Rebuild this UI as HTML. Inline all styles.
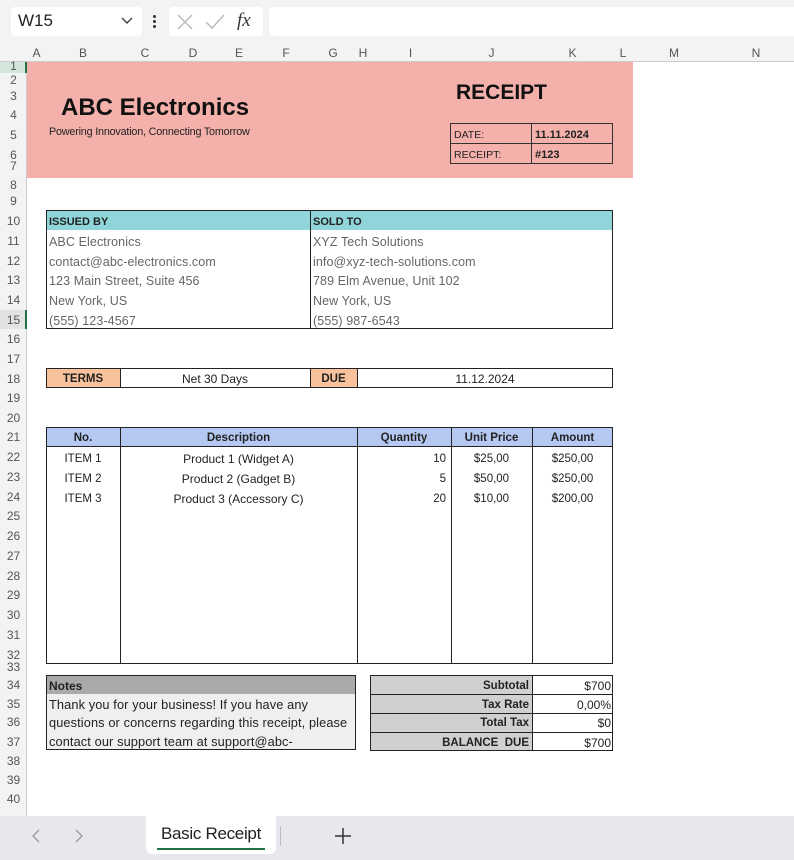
<!DOCTYPE html>
<html><head><meta charset="utf-8"><style>
*{margin:0;padding:0;box-sizing:border-box}
body{width:794px;height:860px;position:relative;overflow:hidden;background:#fff;font-family:"Liberation Sans",sans-serif;font-size:11.5px;color:#222}
.a{position:absolute}
.b{position:absolute;border:1px solid #222}
.t{position:absolute;white-space:nowrap;line-height:19px;padding-top:1px}
.rn{position:absolute;left:0;width:27px;text-align:center;color:#555;font-size:12px}
.ch{position:absolute;top:44px;height:18px;line-height:18px;color:#555;font-size:12px;text-align:center}
.g{color:#666;font-size:12.5px;letter-spacing:0.1px}
.n{font-size:12.8px;letter-spacing:0.1px}
</style></head><body>
<div class="a" style="left:0;top:0;width:794px;height:44px;background:#f3f3f3"></div>
<div class="a" style="left:11px;top:7px;width:131px;height:29px;background:#fff;border-radius:4px"></div>
<div class="t" style="left:18px;top:10px;font-size:17px;line-height:20px;color:#222">W15</div>
<svg class="a" style="left:120px;top:16px" width="14" height="10"><path d="M2 2 L7 7 L12 2" stroke="#444" stroke-width="1.5" fill="none"/></svg>
<div class="a" style="left:153px;top:15px;width:3px;height:3px;background:#333;border-radius:2px;box-shadow:0 5px 0 #333,0 10px 0 #333"></div>
<div class="a" style="left:169px;top:7px;width:94px;height:29px;background:#fff;border-radius:4px"></div>
<svg class="a" style="left:175px;top:12px" width="20" height="20"><path d="M3 3 L17 17 M17 3 L3 17" stroke="#bbb" stroke-width="1.5"/></svg>
<svg class="a" style="left:204px;top:12px" width="22" height="20"><path d="M2 10 L8 16 L20 3" stroke="#bbb" stroke-width="1.5" fill="none"/></svg>
<div class="t" style="left:237px;top:8px;font-family:'Liberation Serif',serif;font-style:italic;font-size:19px;line-height:24px;color:#333">fx</div>
<div class="a" style="left:269px;top:7px;width:530px;height:29px;background:#fff;border-radius:4px"></div>
<div class="a" style="left:0;top:44px;width:794px;height:18px;background:#f3f3f3;border-bottom:1px solid #ccc"></div>
<div class="ch" style="left:27px;width:19px">A</div>
<div class="ch" style="left:46px;width:74px">B</div>
<div class="ch" style="left:120px;width:50px">C</div>
<div class="ch" style="left:170px;width:46px">D</div>
<div class="ch" style="left:216px;width:46px">E</div>
<div class="ch" style="left:262px;width:48px">F</div>
<div class="ch" style="left:310px;width:46px">G</div>
<div class="ch" style="left:356px;width:14px">H</div>
<div class="ch" style="left:370px;width:81px">I</div>
<div class="ch" style="left:451px;width:81px">J</div>
<div class="ch" style="left:532px;width:81px">K</div>
<div class="ch" style="left:613px;width:20px">L</div>
<div class="ch" style="left:633px;width:82px">M</div>
<div class="ch" style="left:715px;width:82px">N</div>
<div class="a" style="left:0;top:62px;width:27px;height:754px;background:#f3f3f3;border-right:1px solid #ccc"></div>
<div class="a" style="left:0;top:62px;width:27px;height:11px;background:#d3e6da;border-right:2px solid #217346"></div>
<div class="a" style="left:0;top:310px;width:27px;height:19px;background:#e2e2e2;border-right:2px solid #217346"></div>
<div class="rn" style="top:59px;line-height:14px">1</div>
<div class="rn" style="top:73px;line-height:14px">2</div>
<div class="rn" style="top:88px;line-height:16px">3</div>
<div class="rn" style="top:106px;line-height:18px">4</div>
<div class="rn" style="top:126px;line-height:18px">5</div>
<div class="rn" style="top:146px;line-height:18px">6</div>
<div class="rn" style="top:160px;line-height:12px">7</div>
<div class="rn" style="top:176px;line-height:18px">8</div>
<div class="rn" style="top:192px;line-height:18px">9</div>
<div class="rn" style="top:212px;line-height:18px">10</div>
<div class="rn" style="top:232px;line-height:18px">11</div>
<div class="rn" style="top:252px;line-height:18px">12</div>
<div class="rn" style="top:271px;line-height:18px">13</div>
<div class="rn" style="top:291px;line-height:18px">14</div>
<div class="rn" style="top:311px;line-height:18px">15</div>
<div class="rn" style="top:330px;line-height:18px">16</div>
<div class="rn" style="top:350px;line-height:18px">17</div>
<div class="rn" style="top:370px;line-height:18px">18</div>
<div class="rn" style="top:389px;line-height:18px">19</div>
<div class="rn" style="top:409px;line-height:18px">20</div>
<div class="rn" style="top:428px;line-height:18px">21</div>
<div class="rn" style="top:448px;line-height:18px">22</div>
<div class="rn" style="top:468px;line-height:18px">23</div>
<div class="rn" style="top:488px;line-height:18px">24</div>
<div class="rn" style="top:507px;line-height:18px">25</div>
<div class="rn" style="top:527px;line-height:18px">26</div>
<div class="rn" style="top:547px;line-height:18px">27</div>
<div class="rn" style="top:567px;line-height:18px">28</div>
<div class="rn" style="top:586px;line-height:18px">29</div>
<div class="rn" style="top:606px;line-height:18px">30</div>
<div class="rn" style="top:626px;line-height:18px">31</div>
<div class="rn" style="top:646px;line-height:18px">32</div>
<div class="rn" style="top:661px;line-height:12px">33</div>
<div class="rn" style="top:676px;line-height:18px">34</div>
<div class="rn" style="top:695px;line-height:18px">35</div>
<div class="rn" style="top:713px;line-height:18px">36</div>
<div class="rn" style="top:733px;line-height:18px">37</div>
<div class="rn" style="top:752px;line-height:18px">38</div>
<div class="rn" style="top:771px;line-height:18px">39</div>
<div class="rn" style="top:790px;line-height:18px">40</div>
<div class="a" style="left:27px;top:62px;width:606px;height:116px;background:#f4b0ab"></div>
<div class="t" style="left:61px;top:92px;font-size:24px;line-height:30px;font-weight:bold;color:#111">ABC Electronics</div>
<div class="t" style="left:49px;top:124px;font-size:10.8px;line-height:14px;color:#222;letter-spacing:-0.2px">Powering Innovation, Connecting Tomorrow</div>
<div class="t" style="left:456px;top:78px;font-size:21px;line-height:28px;font-weight:bold;color:#111">RECEIPT</div>
<div class="b" style="left:450px;top:123px;width:163px;height:41px;border-color:#333"></div>
<div class="a" style="left:450px;top:143px;width:163px;height:1px;background:#333"></div>
<div class="a" style="left:531px;top:123px;width:1px;height:41px;background:#333"></div>
<div class="t" style="left:454px;top:125px;font-size:10.5px">DATE:</div>
<div class="t" style="left:535px;top:125px;font-size:11px;font-weight:bold">11.11.2024</div>
<div class="t" style="left:454px;top:145px;font-size:10.5px">RECEIPT:</div>
<div class="t" style="left:535px;top:145px;font-size:11px;font-weight:bold">#123</div>
<div class="a" style="left:46px;top:210px;width:567px;height:20px;background:#8fd5da"></div>
<div class="b" style="left:46px;top:210px;width:567px;height:119px"></div>
<div class="a" style="left:310px;top:210px;width:1px;height:119px;background:#222"></div>
<div class="t" style="left:49px;top:212px;font-weight:bold;font-size:11px">ISSUED BY</div>
<div class="t" style="left:313px;top:212px;font-weight:bold;font-size:11px">SOLD TO</div>
<div class="t g" style="left:49px;top:232px">ABC Electronics</div>
<div class="t g" style="left:49px;top:252px">contact@abc-electronics.com</div>
<div class="t g" style="left:49px;top:271px">123 Main Street, Suite 456</div>
<div class="t g" style="left:49px;top:291px">New York, US</div>
<div class="t g" style="left:49px;top:311px">(555) 123-4567</div>
<div class="t g" style="left:313px;top:232px">XYZ Tech Solutions</div>
<div class="t g" style="left:313px;top:252px">info@xyz-tech-solutions.com</div>
<div class="t g" style="left:313px;top:271px">789 Elm Avenue, Unit 102</div>
<div class="t g" style="left:313px;top:291px">New York, US</div>
<div class="t g" style="left:313px;top:311px">(555) 987-6543</div>
<div class="a" style="left:46px;top:368px;width:74px;height:20px;background:#f8c39c"></div>
<div class="a" style="left:310px;top:368px;width:47px;height:20px;background:#f8c39c"></div>
<div class="b" style="left:46px;top:368px;width:567px;height:20px"></div>
<div class="a" style="left:120px;top:368px;width:1px;height:20px;background:#222"></div>
<div class="a" style="left:310px;top:368px;width:1px;height:20px;background:#222"></div>
<div class="a" style="left:357px;top:368px;width:1px;height:20px;background:#222"></div>
<div class="t" style="left:46px;width:74px;text-align:center;top:369px;font-weight:bold">TERMS</div>
<div class="t" style="left:120px;width:190px;text-align:center;top:369px;font-size:12px">Net 30 Days</div>
<div class="t" style="left:310px;width:47px;text-align:center;top:369px;font-weight:bold">DUE</div>
<div class="t" style="left:357px;width:256px;text-align:center;top:369px;font-size:12px">11.12.2024</div>
<div class="a" style="left:46px;top:427px;width:567px;height:20px;background:#b4c8f2"></div>
<div class="b" style="left:46px;top:427px;width:567px;height:237px"></div>
<div class="a" style="left:46px;top:446px;width:567px;height:1px;background:#222"></div>
<div class="a" style="left:120px;top:427px;width:1px;height:237px;background:#222"></div>
<div class="a" style="left:357px;top:427px;width:1px;height:237px;background:#222"></div>
<div class="a" style="left:451px;top:427px;width:1px;height:237px;background:#222"></div>
<div class="a" style="left:532px;top:427px;width:1px;height:237px;background:#222"></div>
<div class="t" style="left:46px;width:74px;text-align:center;top:428px;font-weight:bold">No.</div>
<div class="t" style="left:120px;width:237px;text-align:center;top:428px;font-weight:bold">Description</div>
<div class="t" style="left:357px;width:94px;text-align:center;top:428px;font-weight:bold">Quantity</div>
<div class="t" style="left:451px;width:81px;text-align:center;top:428px;font-weight:bold">Unit Price</div>
<div class="t" style="left:532px;width:81px;text-align:center;top:428px;font-weight:bold">Amount</div>
<div class="t" style="left:46px;width:74px;text-align:center;top:449px">ITEM 1</div>
<div class="t" style="left:46px;width:74px;text-align:center;top:469px">ITEM 2</div>
<div class="t" style="left:46px;width:74px;text-align:center;top:489px">ITEM 3</div>
<div class="t" style="left:120px;width:237px;text-align:center;top:449px;font-size:12px">Product 1 (Widget A)</div>
<div class="t" style="left:120px;width:237px;text-align:center;top:469px;font-size:12px">Product 2 (Gadget B)</div>
<div class="t" style="left:120px;width:237px;text-align:center;top:489px;font-size:12px">Product 3 (Accessory C)</div>
<div class="t" style="left:357px;width:89px;text-align:right;top:449px">10</div>
<div class="t" style="left:357px;width:89px;text-align:right;top:469px">5</div>
<div class="t" style="left:357px;width:89px;text-align:right;top:489px">20</div>
<div class="t" style="left:451px;width:81px;text-align:center;top:449px">$25,00</div>
<div class="t" style="left:451px;width:81px;text-align:center;top:469px">$50,00</div>
<div class="t" style="left:451px;width:81px;text-align:center;top:489px">$10,00</div>
<div class="t" style="left:532px;width:81px;text-align:center;top:449px">$250,00</div>
<div class="t" style="left:532px;width:81px;text-align:center;top:469px">$250,00</div>
<div class="t" style="left:532px;width:81px;text-align:center;top:489px">$200,00</div>
<div class="a" style="left:46px;top:675px;width:310px;height:75px;background:#efefef"></div>
<div class="a" style="left:46px;top:675px;width:310px;height:19px;background:#aaaaaa"></div>
<div class="b" style="left:46px;top:675px;width:310px;height:75px"></div>
<div class="t" style="left:49px;top:676px;font-weight:bold;font-size:12px">Notes</div>
<div class="t n" style="left:49px;top:694px">Thank you for your business! If you have any</div>
<div class="t n" style="left:49px;top:712px">questions or concerns regarding this receipt, please</div>
<div class="t n" style="left:49px;top:731px">contact our support team at support@abc-</div>
<div class="a" style="left:370px;top:675px;width:162px;height:76px;background:#d0d0d0"></div>
<div class="b" style="left:370px;top:675px;width:243px;height:76px"></div>
<div class="a" style="left:532px;top:675px;width:1px;height:76px;background:#222"></div>
<div class="a" style="left:370px;top:694px;width:243px;height:1px;background:#222"></div>
<div class="a" style="left:370px;top:713px;width:243px;height:1px;background:#222"></div>
<div class="a" style="left:370px;top:732px;width:243px;height:1px;background:#222"></div>
<div class="t" style="left:370px;width:159px;text-align:right;top:676px;font-weight:bold">Subtotal</div>
<div class="t" style="left:370px;width:159px;text-align:right;top:695px;font-weight:bold">Tax Rate</div>
<div class="t" style="left:370px;width:159px;text-align:right;top:713px;font-weight:bold">Total Tax</div>
<div class="t" style="left:370px;width:159px;text-align:right;top:733px;font-weight:bold">BALANCE&nbsp; DUE</div>
<div class="t" style="left:532px;width:79px;text-align:right;top:676px;font-size:12px">$700</div>
<div class="t" style="left:532px;width:79px;text-align:right;top:695px;font-size:12px">0,00%</div>
<div class="t" style="left:532px;width:79px;text-align:right;top:713px;font-size:12px">$0</div>
<div class="t" style="left:532px;width:79px;text-align:right;top:733px;font-size:12px">$700</div>
<div class="a" style="left:0;top:816px;width:794px;height:44px;background:#e6e8ee"></div>
<svg class="a" style="left:30px;top:828px" width="12" height="16"><path d="M9 2 L3 8 L9 14" stroke="#999" stroke-width="1.3" fill="none"/></svg>
<svg class="a" style="left:73px;top:828px" width="12" height="16"><path d="M3 2 L9 8 L3 14" stroke="#999" stroke-width="1.3" fill="none"/></svg>
<div class="a" style="left:146px;top:816px;width:130px;height:38px;background:#fff;border-radius:0 0 6px 6px"></div>
<div class="t" style="left:146px;width:130px;text-align:center;top:822px;font-size:17px;line-height:22px;color:#222;letter-spacing:-0.3px">Basic Receipt</div>
<div class="a" style="left:157px;top:848px;width:108px;height:2px;background:#217346"></div>
<div class="a" style="left:280px;top:826px;width:1px;height:20px;background:#bbb"></div>
<svg class="a" style="left:334px;top:827px" width="18" height="18"><path d="M9 1 V17 M1 9 H17" stroke="#333" stroke-width="1.5"/></svg>
</body></html>
